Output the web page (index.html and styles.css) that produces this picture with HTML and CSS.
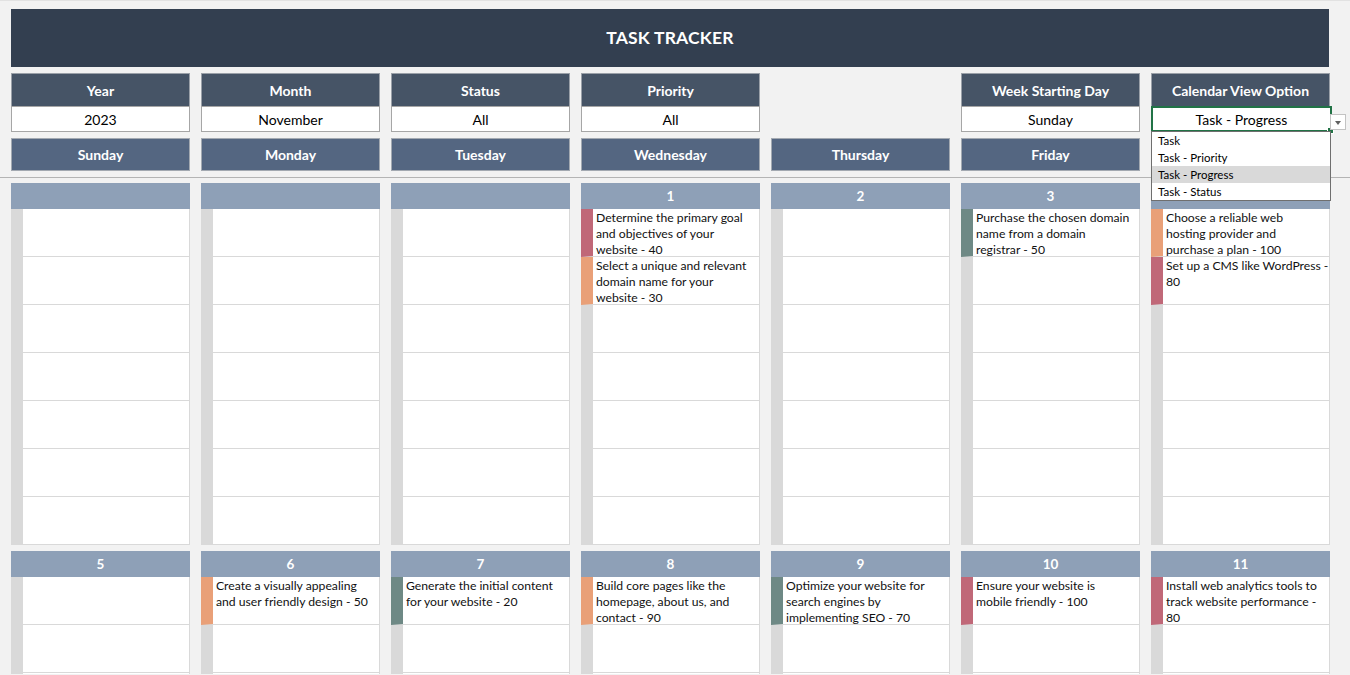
FILE: index.html
```html
<!DOCTYPE html>
<html lang="en">
<head>
  <meta charset="UTF-8">
  <meta name="viewport" content="width=device-width, initial-scale=1.0">
  <title>Task Tracker</title>
  <link rel="stylesheet" href="styles.css">
</head>
<body>

  <div class="top">
    <div class="title">TASK TRACKER</div>

    <div class="filters">
      <div class="filter">
        <div class="filter-label">Year</div>
        <div class="filter-value">2023</div>
      </div>
      <div class="filter">
        <div class="filter-label">Month</div>
        <div class="filter-value">November</div>
      </div>
      <div class="filter">
        <div class="filter-label">Status</div>
        <div class="filter-value">All</div>
      </div>
      <div class="filter">
        <div class="filter-label">Priority</div>
        <div class="filter-value">All</div>
      </div>
      <div></div>
      <div class="filter">
        <div class="filter-label">Week Starting Day</div>
        <div class="filter-value">Sunday</div>
      </div>
      <div class="filter">
        <div class="filter-label">Calendar View Option</div>
        <div class="filter-value active">
          Task - Progress
          <span class="handle"></span>
          <span class="drop-btn"></span>
          <ul class="drop-list">
            <li>Task</li>
            <li>Task - Priority</li>
            <li class="selected">Task - Progress</li>
            <li>Task - Status</li>
          </ul>
        </div>
      </div>
    </div>

    <div class="weekdays">
      <div>Sunday</div>
      <div>Monday</div>
      <div>Tuesday</div>
      <div>Wednesday</div>
      <div>Thursday</div>
      <div>Friday</div>
      <div>Saturday</div>
    </div>
  </div>

  <div class="divider"></div>

  <div class="calendar">
    <!-- week 1 -->
    <div class="week">
      <div class="day">
        <div class="date"></div>
        <div class="slots"></div>
      </div>
      <div class="day">
        <div class="date"></div>
        <div class="slots"></div>
      </div>
      <div class="day">
        <div class="date"></div>
        <div class="slots"></div>
      </div>
      <div class="day">
        <div class="date">1</div>
        <div class="slots">
          <div class="task pink">Determine the primary goal<br>and objectives of your<br>website - 40</div>
          <div class="task orange">Select a unique and relevant<br>domain name for your<br>website - 30</div>
        </div>
      </div>
      <div class="day">
        <div class="date">2</div>
        <div class="slots"></div>
      </div>
      <div class="day">
        <div class="date">3</div>
        <div class="slots">
          <div class="task teal">Purchase the chosen domain<br>name from a domain<br>registrar - 50</div>
        </div>
      </div>
      <div class="day">
        <div class="date">4</div>
        <div class="slots">
          <div class="task orange">Choose a reliable web<br>hosting provider and<br>purchase a plan - 100</div>
          <div class="task pink">Set up a CMS like WordPress -<br>80</div>
        </div>
      </div>
    </div>

    <!-- week 2 -->
    <div class="week">
      <div class="day">
        <div class="date">5</div>
        <div class="slots"></div>
      </div>
      <div class="day">
        <div class="date">6</div>
        <div class="slots">
          <div class="task orange">Create a visually appealing<br>and user friendly design - 50</div>
        </div>
      </div>
      <div class="day">
        <div class="date">7</div>
        <div class="slots">
          <div class="task teal">Generate the initial content<br>for your website - 20</div>
        </div>
      </div>
      <div class="day">
        <div class="date">8</div>
        <div class="slots">
          <div class="task orange">Build core pages like the<br>homepage, about us, and<br>contact - 90</div>
        </div>
      </div>
      <div class="day">
        <div class="date">9</div>
        <div class="slots">
          <div class="task teal">Optimize your website for<br>search engines by<br>implementing SEO - 70</div>
        </div>
      </div>
      <div class="day">
        <div class="date">10</div>
        <div class="slots">
          <div class="task pink">Ensure your website is<br>mobile friendly - 100</div>
        </div>
      </div>
      <div class="day">
        <div class="date">11</div>
        <div class="slots">
          <div class="task pink">Install web analytics tools to<br>track website performance -<br>80</div>
        </div>
      </div>
    </div>
  </div>

</body>
</html>
```

FILE: styles.css
```css
html, body {
  overflow: hidden;
}
body {
  margin: 0;
  height: 674px;
  background-color: #f2f2f2;
  border-top: 1px solid #e2e2e2;
  font-family: Lato, "Open Sans", sans-serif;
  color: #000;
}
.top {
  padding: 8px 0 0 11px;
  width: 1319px;
}
.title {
  height: 58px;
  line-height: 58px;
  margin-right: 1px;
  background-color: #333f50;
  color: #fff;
  text-align: center;
  font-size: 17.5px;
  font-weight: bold;
  letter-spacing: 0.2px;
}
.filters, .weekdays, .week {
  display: grid;
  grid-template-columns: repeat(7, 179px);
  column-gap: 11px;
}
.filters {
  margin-top: 6px;
}
.filter-label {
  height: 33px;
  line-height: 33px;
  box-sizing: border-box;
  background-color: #465466;
  border: 1px solid #9aa0a8;
  border-bottom: none;
  color: #fff;
  text-align: center;
  font-size: 14px;
  font-weight: bold;
}
.filter-value {
  height: 26px;
  line-height: 25px;
  box-sizing: border-box;
  background-color: #fff;
  border: 1px solid #a6a6a6;
  text-align: center;
  font-size: 14px;
}
.filter-value.active {
  position: relative;
  border: 2px solid #217346;
  margin-right: -2px;
  line-height: 23px;
}
.handle {
  position: absolute;
  right: -4px;
  bottom: -4px;
  width: 5px;
  height: 5px;
  background-color: #217346;
  border: 1px solid #fff;
}
.drop-btn {
  position: absolute;
  left: 100%;
  top: 6px;
  width: 16px;
  height: 16px;
  box-sizing: border-box;
  background-color: #fff;
  border: 1px solid #c3c3c3;
}
.drop-btn::after {
  content: "";
  position: absolute;
  left: 4px;
  top: 6px;
  border-left: 3.5px solid transparent;
  border-right: 3.5px solid transparent;
  border-top: 4px solid #606060;
}
.drop-list {
  position: absolute;
  left: -2px;
  top: 100%;
  margin: 1px 0 0;
  padding: 0;
  width: 180px;
  box-sizing: border-box;
  list-style: none;
  background-color: #fff;
  border: 1px solid #6f6f6f;
  text-align: left;
  z-index: 5;
}
.drop-list li {
  height: 17px;
  line-height: 17px;
  padding-left: 6px;
  font-size: 11.5px;
}
.drop-list li.selected {
  background-color: #d9d9d9;
}
.weekdays {
  margin-top: 6px;
}
.weekdays div {
  height: 33px;
  line-height: 32px;
  box-sizing: border-box;
  background-color: #546681;
  border: 1px solid #a3a9b1;
  color: #fff;
  text-align: center;
  font-size: 14px;
  font-weight: bold;
}
.divider {
  margin-top: 6px;
  height: 1px;
  background-color: #b4b4b4;
}
.calendar {
  padding: 5px 0 0 11px;
  width: 1319px;
  height: 491px;
  overflow: hidden;
}
.week {
  margin-bottom: 6px;
}
.date {
  height: 26px;
  line-height: 26px;
  background-color: #8ea0b7;
  color: #fff;
  text-align: center;
  font-size: 13.5px;
  font-weight: bold;
}
.slots {
  height: 336px;
  box-sizing: border-box;
  border-left: 12px solid #d9d9d9;
  border-right: 1px solid #d9d9d9;
  background: repeating-linear-gradient(to bottom, #fff 0, #fff 47px, #d9d9d9 47px, #d9d9d9 48px);
}
.task {
  height: 48px;
  box-sizing: border-box;
  margin-left: -12px;
  padding: 1px 0 0 3px;
  border-left: 12px solid #d9d9d9;
  border-bottom: 1px solid #d9d9d9;
  background-color: #fff;
  color: #111;
  font-size: 12.2px;
  line-height: 16px;
  white-space: nowrap;
}
.task.pink {
  border-left-color: #c06878;
}
.task.orange {
  border-left-color: #e9a078;
}
.task.teal {
  border-left-color: #6e8985;
}
```
